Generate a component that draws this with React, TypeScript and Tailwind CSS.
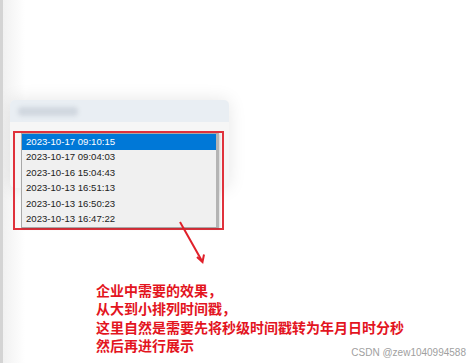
const times = [
  '2023-10-17 09:10:15',
  '2023-10-17 09:04:03',
  '2023-10-16 15:04:43',
  '2023-10-13 16:51:13',
  '2023-10-13 16:50:23',
  '2023-10-13 16:47:22',
];

const notes = [
  '企业中需要的效果，',
  '从大到小排列时间戳，',
  '这里自然是需要先将秒级时间戳转为年月日时分秒',
  '然后再进行展示',
];

export default function App() {
  return (
    <div className="relative w-[474px] h-[363px] overflow-hidden bg-white border-l-[3px] border-l-[#d4d4d4] font-['Liberation_Sans',sans-serif]">
      {/* faint page shadow on the left */}
      <div className="absolute left-0 top-0 h-full w-[22px] bg-gradient-to-r from-[#f1f1f1] to-white" />

      {/* blurred dialog behind the dropdown */}
      <div className="relative ml-[7px] mt-[100px] w-[219px] h-[88px] rounded-[5px] bg-[#f6f6f6] shadow-[0_0_18px_rgba(0,0,0,0.10)] overflow-hidden">
        <div className="h-[22px] bg-[#e9eef3] flex items-center px-[8px]">
          <div className="w-[60px] h-[9px] rounded bg-[#d0d7df] blur-[2px]" />
        </div>
      </div>

      {/* red annotation box around the dropdown */}
      <div className="absolute left-[10px] top-[131px] w-[211px] h-[99px] border-2 border-solid border-[color:#e0323c]" />

      {/* dropdown list */}
      <div className="absolute left-[18px] top-[133px] w-[198px] h-[95px] flex flex-col bg-[#f0f0f0] border border-solid border-[color:#a8a8a8] border-r-[3px] border-r-[#b4b4b4] shadow-[1px_1px_2px_rgba(0,0,0,0.15)]">
        {times.map((t, i) => (
          <div
            key={t}
            className={
              i === 0
                ? 'h-[15.5px] flex items-center pl-[4px] text-[9.6px] bg-[#0078d7] text-white'
                : 'h-[15.5px] flex items-center pl-[4px] text-[9.6px] text-[#222]'
            }
          >
            {t}
          </div>
        ))}
      </div>

      {/* arrow */}
      <svg className="absolute left-[170px] top-[218px]" width="40" height="50" viewBox="0 0 40 50">
        <path d="M7 4 L29 43" stroke="#e0202a" strokeWidth="2" fill="none" />
        <path d="M24 39 L29.5 44 L31 36.5" stroke="#e0202a" strokeWidth="2" fill="none" />
      </svg>

      {/* annotation text */}
      <div className="ml-[93px] mt-[93px] flex flex-col text-[14px] leading-[18.3px] font-bold text-[#e3141e] font-['Noto_Sans_CJK_SC',sans-serif]">
        {notes.map((n) => (
          <div key={n}>{n}</div>
        ))}
      </div>

      <div className="absolute right-[8px] top-[347px] text-[10px] leading-[12px] text-[#a0a0a0]">
        CSDN @zew1040994588
      </div>
    </div>
  );
}
